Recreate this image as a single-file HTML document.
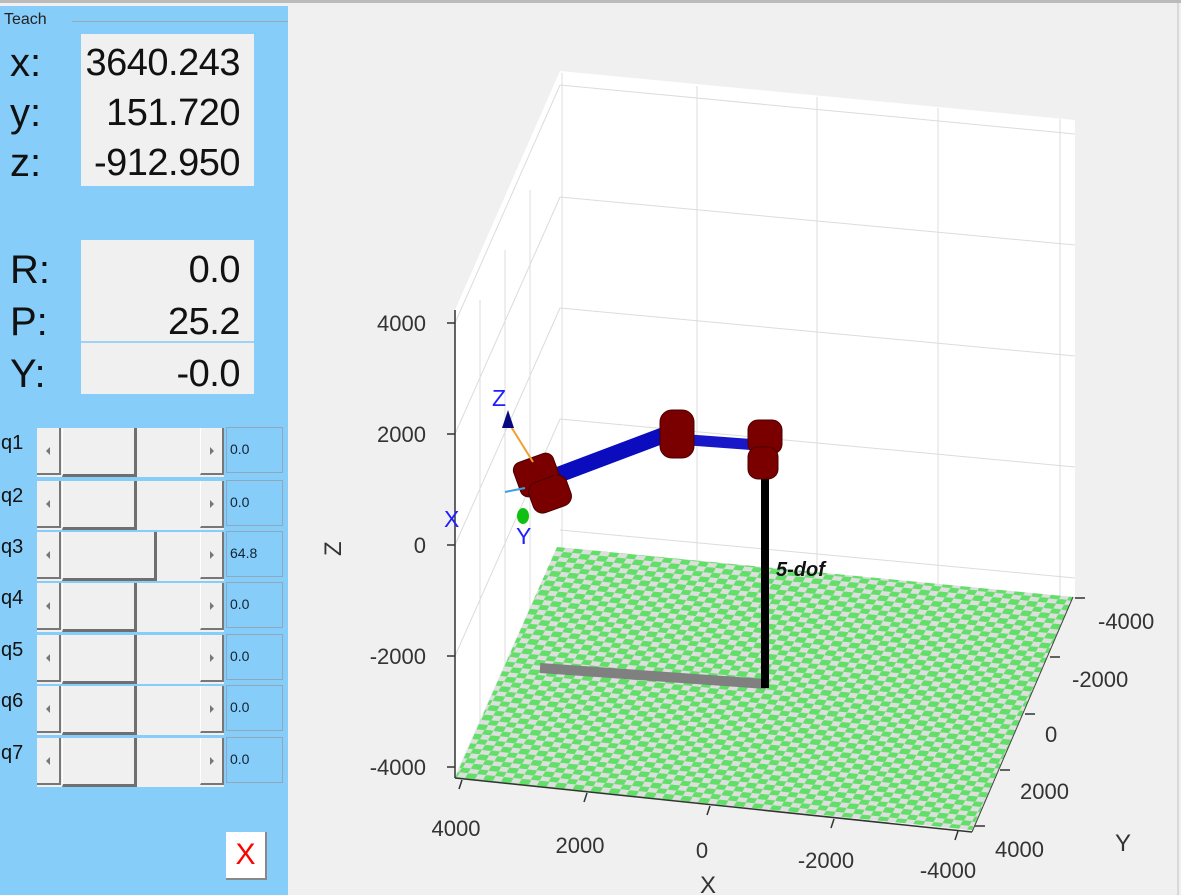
<!DOCTYPE html>
<html><head><meta charset="utf-8">
<style>
body{margin:0;width:1181px;height:895px;background:#f0f0f0;position:relative;overflow:hidden;font-family:"Liberation Sans",sans-serif}
.a{position:absolute}
.panel{left:0;top:6px;width:288px;height:889px;background:#87cdf9}
.box{background:#f0f0f0}
.lab{font-size:40px;color:#111;line-height:1}
.val{font-size:38px;color:#111;text-align:right;line-height:1;letter-spacing:-0.5px}
.ql{font-size:20px;color:#111}
.sl{left:37px;width:187px;height:49px;background:#f0f0f0}
.btn{top:0;width:24px;height:47px;background:#f0f0f0;border-right:2px solid #777;border-bottom:2px solid #777;box-sizing:border-box}
.thumb{top:0;height:49px;background:#f0f0f0;border-right:3px solid #6f6f6f;border-bottom:3px solid #6f6f6f;box-sizing:border-box;border-left:1px solid #fff}
.vb{left:226px;width:57px;height:46px;border:1px solid #8fa9bb;box-sizing:border-box;font-size:14px;color:#123;padding:13px 0 0 3px}
</style></head><body>
<div class="a" style="left:0;top:0;width:1181px;height:3px;background:#bbb"></div>
<div class="a" style="left:1177px;top:3px;width:2px;height:892px;background:#d8d8d8"></div>
<div class="a panel"></div>
<div class="a" style="left:4px;top:11px;font-size:16px;color:#222">Teach</div>
<div class="a" style="left:72px;top:21px;width:216px;height:1px;background:#9ab"></div>
<div class="a box" style="left:81px;top:34px;width:173px;height:152px"></div>
<div class="a lab" style="left:10px;top:43px">x:</div>
<div class="a lab" style="left:10px;top:93px">y:</div>
<div class="a lab" style="left:10px;top:143px">z:</div>
<div class="a" style="left:81px;top:40px;width:173px;height:45px;overflow:hidden"><div class="a val" style="right:14px;top:4px;white-space:nowrap">3640.243</div></div>
<div class="a val" style="left:81px;width:159px;top:94px">151.720</div>
<div class="a val" style="left:81px;width:159px;top:144px">-912.950</div>
<div class="a box" style="left:81px;top:240px;width:173px;height:154px"></div>
<div class="a" style="left:81px;top:341px;width:173px;height:2px;background:#9fd3f5"></div>
<div class="a lab" style="left:10px;top:250px">R:</div>
<div class="a lab" style="left:10px;top:302px">P:</div>
<div class="a lab" style="left:10px;top:354px">Y:</div>
<div class="a val" style="left:81px;width:159px;top:251px">0.0</div>
<div class="a val" style="left:81px;width:159px;top:303px">25.2</div>
<div class="a val" style="left:81px;width:159px;top:355px">-0.0</div>

<div id="sl"></div>
<script>
var tops=[428,481,532,583,635,686,738],vals=["0.0","0.0","64.8","0.0","0.0","0.0","0.0"],h="";
for(var i=0;i<7;i++){var t=tops[i],th=(i==2?157:137);
h+='<div class="a ql" style="left:1px;top:'+(t+4)+'px">q'+(i+1)+'</div>';
h+='<div class="a sl" style="top:'+t+'px">'+
'<div class="a btn" style="left:0"><div class="a" style="left:9px;top:19px;width:0;height:0;border-top:4px solid transparent;border-bottom:4px solid transparent;border-right:4px solid #777"></div></div>'+
'<div class="a thumb" style="left:25px;width:'+(th-62)+'px"></div>'+
'<div class="a btn" style="left:163px;border-left:1px solid #fff"><div class="a" style="left:9px;top:19px;width:0;height:0;border-top:4px solid transparent;border-bottom:4px solid transparent;border-left:4px solid #777"></div></div></div>';
h+='<div class="a vb" style="top:'+(t-1)+'px">'+vals[i]+'</div>';}
document.getElementById('sl').innerHTML=h;
</script>
<div class="a" style="left:226px;top:832px;width:41px;height:48px;background:#fff;border-right:2px solid #888;border-bottom:2px solid #888;box-sizing:border-box;color:#f00;font-size:30px;text-align:center;line-height:46px">X</div>

<svg class="a" style="left:0;top:0" width="1181" height="895">
<defs>
<pattern id="ck" width="18" height="10" patternUnits="userSpaceOnUse" patternTransform="rotate(6) skewX(-25)">
<rect width="18" height="10" fill="#dedede"/><rect x="0" y="0" width="10" height="5.5" rx="1.5" fill="#62df68"/><rect x="9" y="5" width="10" height="5.5" rx="1.5" fill="#62df68"/>
</pattern>
</defs>
<polygon points="455,310 560,71 1075,120 1075,597 557,547 455,775" fill="#fff"/>
<g stroke="#dcdcdc" stroke-width="1" fill="none">
<line x1="562" y1="73" x2="562" y2="548"/><line x1="697" y1="86" x2="697" y2="560"/><line x1="817" y1="97" x2="817" y2="572"/><line x1="938" y1="108" x2="938" y2="584"/><line x1="1060" y1="119" x2="1060" y2="596"/>
<line x1="560" y1="85" x2="1075" y2="134"/><line x1="560" y1="197" x2="1075" y2="245"/><line x1="560" y1="308" x2="1075" y2="356"/><line x1="560" y1="419" x2="1075" y2="467"/><line x1="560" y1="530" x2="1075" y2="578"/>
<line x1="455" y1="323" x2="560" y2="85"/><line x1="455" y1="434" x2="560" y2="197"/><line x1="455" y1="545" x2="560" y2="308"/><line x1="455" y1="656" x2="560" y2="419"/>
<line x1="480" y1="300" x2="480" y2="770"/><line x1="505" y1="250" x2="505" y2="770"/><line x1="530" y1="190" x2="530" y2="770"/>
</g>
<polygon points="557,547 1073,597 972,830 455,778" fill="url(#ck)"/>
<line x1="455" y1="778" x2="972" y2="832" stroke="#333" stroke-width="1.5"/>
<line x1="972" y1="832" x2="1073" y2="597" stroke="#444" stroke-width="1"/>
<line x1="455" y1="310" x2="455" y2="778" stroke="#333" stroke-width="1.5"/>
<g stroke="#333" stroke-width="1.5">
<line x1="447" y1="323" x2="455" y2="323"/><line x1="447" y1="434" x2="455" y2="434"/><line x1="447" y1="545" x2="455" y2="545"/><line x1="447" y1="656" x2="455" y2="656"/><line x1="447" y1="767" x2="455" y2="767"/>
<line x1="462" y1="780" x2="459" y2="789"/><line x1="587" y1="793" x2="584" y2="802"/><line x1="710" y1="806" x2="707" y2="815"/><line x1="834" y1="819" x2="831" y2="828"/><line x1="958" y1="831" x2="955" y2="840"/>
<line x1="1075" y1="598" x2="1085" y2="598"/><line x1="1050" y1="657" x2="1060" y2="657"/><line x1="1025" y1="714" x2="1035" y2="714"/><line x1="1000" y1="770" x2="1010" y2="770"/><line x1="975" y1="826" x2="985" y2="826"/>
</g>
<g font-family="Liberation Sans" font-size="22" fill="#333">
<text x="426" y="331" text-anchor="end">4000</text><text x="426" y="442" text-anchor="end">2000</text><text x="426" y="553" text-anchor="end">0</text><text x="426" y="664" text-anchor="end">-2000</text><text x="426" y="775" text-anchor="end">-4000</text>
<text x="456" y="836" text-anchor="middle">4000</text><text x="580" y="853" text-anchor="middle">2000</text><text x="702" y="858" text-anchor="middle">0</text><text x="826" y="868" text-anchor="middle">-2000</text><text x="948" y="878" text-anchor="middle">-4000</text>
<text x="1098" y="629">-4000</text><text x="1072" y="687">-2000</text><text x="1045" y="742">0</text><text x="1020" y="799">2000</text><text x="995" y="857">4000</text>
<text x="1115" y="851" font-size="24">Y</text><text x="700" y="893" font-size="24">X</text>
<text x="0" y="0" font-size="24" transform="translate(341,556) rotate(-90)">Z</text>
</g>
<line x1="540" y1="668" x2="766" y2="684" stroke="#808080" stroke-width="10"/>
<line x1="765" y1="470" x2="765" y2="688" stroke="#000" stroke-width="8"/>
<line x1="550" y1="478" x2="672" y2="432" stroke="#0c0cbf" stroke-width="16"/>
<line x1="690" y1="440" x2="758" y2="445" stroke="#1818c8" stroke-width="11"/>
<g fill="#7a0000" stroke="#4a0000" stroke-width="1">
<rect x="516" y="457" width="42" height="36" rx="8" transform="rotate(-20 537 475)"/>
<rect x="530" y="478" width="40" height="32" rx="10" transform="rotate(-20 550 494)"/>
<rect x="660" y="410" width="34" height="48" rx="12"/>
<rect x="748" y="420" width="34" height="34" rx="10"/>
<rect x="748" y="447" width="30" height="32" rx="10"/>
</g>
<line x1="510" y1="425" x2="533" y2="462" stroke="#f0a030" stroke-width="2"/>
<polygon points="508,410 502,428 514,428" fill="#0a0a80"/>
<line x1="505" y1="492" x2="525" y2="488" stroke="#3aa0e0" stroke-width="2"/>
<ellipse cx="523" cy="516" rx="6" ry="8" fill="#10c010"/>
<g font-family="Liberation Sans" font-size="23" fill="#2020ff">
<text x="492" y="406">Z</text><text x="444" y="527">X</text><text x="516" y="544">Y</text>
</g>
<text x="776" y="576" font-family="Liberation Sans" font-size="20" font-weight="bold" font-style="italic" fill="#111">5-dof</text>
</svg>
</body></html>
